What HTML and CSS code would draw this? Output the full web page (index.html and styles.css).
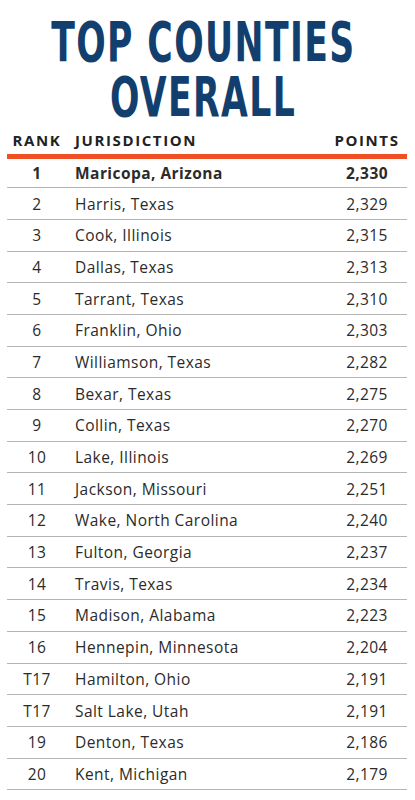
FILE: index.html
```html
<html>

<head>
  <title>Top Counties Overall</title>
  <link rel="stylesheet" href="styles.css">
</head>

<body>
  <div class="page">
    <h1 class="title">
      <span class="title-line">TOP COUNTIES</span>
      <span class="title-line">OVERALL</span>
    </h1>
    <table class="ranking">
      <thead>
        <tr>
          <th class="rank">RANK</th>
          <th class="name">JURISDICTION</th>
          <th class="points">POINTS</th>
        </tr>
      </thead>
      <tbody>
        <tr class="leader"><td class="rank">1</td><td class="name">Maricopa, Arizona</td><td class="points">2,330</td></tr>
        <tr><td class="rank">2</td><td class="name">Harris, Texas</td><td class="points">2,329</td></tr>
        <tr><td class="rank">3</td><td class="name">Cook, Illinois</td><td class="points">2,315</td></tr>
        <tr><td class="rank">4</td><td class="name">Dallas, Texas</td><td class="points">2,313</td></tr>
        <tr><td class="rank">5</td><td class="name">Tarrant, Texas</td><td class="points">2,310</td></tr>
        <tr><td class="rank">6</td><td class="name">Franklin, Ohio</td><td class="points">2,303</td></tr>
        <tr><td class="rank">7</td><td class="name">Williamson, Texas</td><td class="points">2,282</td></tr>
        <tr><td class="rank">8</td><td class="name">Bexar, Texas</td><td class="points">2,275</td></tr>
        <tr><td class="rank">9</td><td class="name">Collin, Texas</td><td class="points">2,270</td></tr>
        <tr><td class="rank">10</td><td class="name">Lake, Illinois</td><td class="points">2,269</td></tr>
        <tr><td class="rank">11</td><td class="name">Jackson, Missouri</td><td class="points">2,251</td></tr>
        <tr><td class="rank">12</td><td class="name">Wake, North Carolina</td><td class="points">2,240</td></tr>
        <tr><td class="rank">13</td><td class="name">Fulton, Georgia</td><td class="points">2,237</td></tr>
        <tr><td class="rank">14</td><td class="name">Travis, Texas</td><td class="points">2,234</td></tr>
        <tr><td class="rank">15</td><td class="name">Madison, Alabama</td><td class="points">2,223</td></tr>
        <tr><td class="rank">16</td><td class="name">Hennepin, Minnesota</td><td class="points">2,204</td></tr>
        <tr><td class="rank">T17</td><td class="name">Hamilton, Ohio</td><td class="points">2,191</td></tr>
        <tr><td class="rank">T17</td><td class="name">Salt Lake, Utah</td><td class="points">2,191</td></tr>
        <tr><td class="rank">19</td><td class="name">Denton, Texas</td><td class="points">2,186</td></tr>
        <tr><td class="rank">20</td><td class="name">Kent, Michigan</td><td class="points">2,179</td></tr>
      </tbody>
    </table>
  </div>
</body>

</html>
```

FILE: styles.css
```css
body {
  margin: 0;
  background: #fff;
  font-family: 'Open Sans', sans-serif;
  color: #2b2b2b;
}

.page {
  padding: 0 8px 0 7px;
}

.title {
  display: flex;
  flex-direction: column;
  align-items: center;
  margin: 0;
  padding: 15px 8px 0 0;
  height: 120px;
  box-sizing: border-box;
  font-family: 'DejaVu Sans Condensed', 'DejaVu Sans', sans-serif;
  font-weight: bold;
  font-size: 55px;
  line-height: 55px;
  letter-spacing: 2px;
  color: #123f6d;
}

.title-line {
  white-space: nowrap;
  transform: scaleX(0.7);
}

.ranking {
  width: 100%;
  border-collapse: collapse;
}

.ranking th {
  height: 36px;
  padding: 7px 0 0;
  box-sizing: border-box;
  font-size: 15px;
  font-weight: bold;
  letter-spacing: 1.6px;
  color: #222;
  border-bottom: 5px solid #f04e23;
}

.ranking td {
  height: 31.7px;
  padding: 0;
  box-sizing: border-box;
  font-size: 15.5px;
  letter-spacing: 0.45px;
  border-bottom: 1.5px solid #b5b5b5;
}

.ranking .rank {
  width: 60px;
  text-align: center;
}

.ranking .name {
  padding-left: 8px;
  text-align: left;
}

.ranking .points {
  width: 80px;
  text-align: center;
}

.leader td {
  font-weight: bold;
}
```
